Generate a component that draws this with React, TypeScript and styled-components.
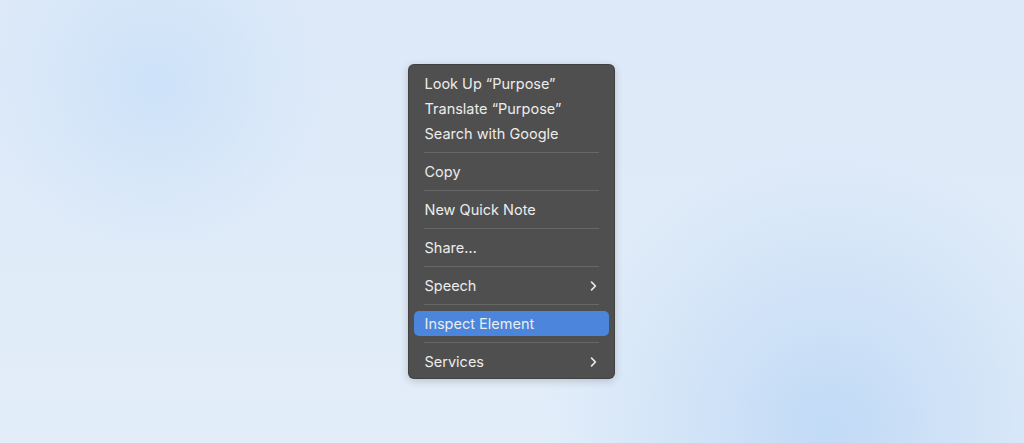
import * as React from 'react';
import styled, { createGlobalStyle } from 'styled-components';

type Entry =
    | { kind: 'item'; label: string; submenu?: boolean; active?: boolean }
    | { kind: 'sep' };

const entries: Entry[] = [
    { kind: 'item', label: 'Look Up \u201cPurpose\u201d' },
    { kind: 'item', label: 'Translate \u201cPurpose\u201d' },
    { kind: 'item', label: 'Search with Google' },
    { kind: 'sep' },
    { kind: 'item', label: 'Copy' },
    { kind: 'sep' },
    { kind: 'item', label: 'New Quick Note' },
    { kind: 'sep' },
    { kind: 'item', label: 'Share\u2026' },
    { kind: 'sep' },
    { kind: 'item', label: 'Speech', submenu: true },
    { kind: 'sep' },
    { kind: 'item', label: 'Inspect Element', active: true },
    { kind: 'sep' },
    { kind: 'item', label: 'Services', submenu: true },
];

// 서브메뉴 화살표
const Chevron = () => (
    <svg width="7" height="10" viewBox="0 0 7 10" fill="none">
        <path d="M1.6 1.2L5.4 5L1.6 8.8" stroke="#e8e8e8" strokeWidth="1.7" strokeLinecap="round" strokeLinejoin="round" />
    </svg>
);

export default function App() {
    return (
        <>
            <GlobalStyle />
            <Desktop>
                <Menu>
                    {entries.map((entry, i) =>
                        entry.kind === 'sep' ? (
                            <Separator key={i} />
                        ) : (
                            <Item key={i} $active={entry.active}>
                                <span>{entry.label}</span>
                                {entry.submenu && <Chevron />}
                            </Item>
                        )
                    )}
                </Menu>
            </Desktop>
        </>
    );
}

const GlobalStyle = createGlobalStyle`
    html, body {
        margin: 0;
        padding: 0;
    }
    body {
        font-family: Inter, "Liberation Sans", sans-serif;
    }
`

const Desktop = styled.div`
    width: 1024px;
    height: 443px;
    box-sizing: border-box;
    padding: 64px 2px 0 0;
    display: flex;
    justify-content: center;
    align-items: flex-start;
    overflow: hidden;
    background:
        radial-gradient(circle at 155px 85px, #cde2f9 0px, rgba(205, 226, 249, 0) 170px),
        radial-gradient(circle at 830px 430px, #c1daf6 0px, rgba(193, 218, 246, 0) 280px),
        linear-gradient(180deg, #dde9f8 0%, #e2edf9 100%);
`

const Menu = styled.div`
    width: 207px;
    box-sizing: border-box;
    padding: 6px 0 4px;
    display: flex;
    flex-direction: column;
    background-color: #4f4f4f;
    border-radius: 6px;
    border: 1px solid rgba(40, 40, 40, 0.35);
    box-shadow: rgba(0, 0, 0, 0.18) 0px 2px 8px;
`

const Item = styled.div<{ $active?: boolean }>`
    height: 25px;
    margin: 0 5px;
    padding: 0 12px 0 11px;
    display: flex;
    align-items: center;
    justify-content: space-between;
    border-radius: 5px;
    font-size: 14.5px;
    color: #ececec;
    background-color: ${(p) => (p.$active ? '#4b86dc' : 'transparent')};
    white-space: nowrap;
`

const Separator = styled.div`
    height: 1px;
    margin: 6px 15px;
    background-color: #676767;
`
